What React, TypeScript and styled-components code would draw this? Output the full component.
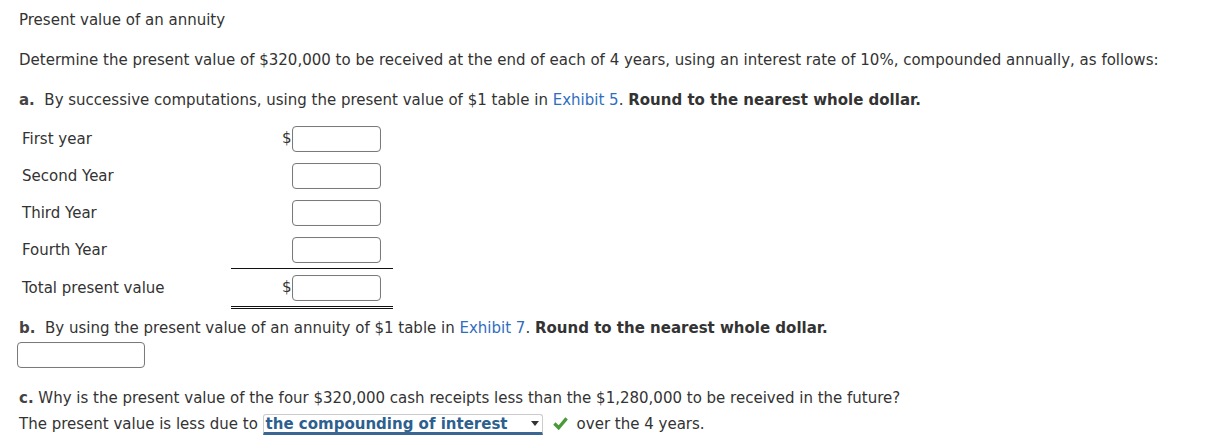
import React from "react";
import styled, { createGlobalStyle } from "styled-components";

const Global = createGlobalStyle`
  body {
    margin: 0;
    background: #fff;
    font-family: "DejaVu Sans", Verdana, sans-serif;
    font-size: 15px;
    color: #333;
  }
`;

const Page = styled.div`
  padding: 10px 19px;
`;

const Para = styled.p<{ gap?: number }>`
  margin: 0;
  margin-top: ${(p) => p.gap ?? 0}px;
  line-height: 20px;
`;

const Lead = styled.b`
  color: #444;
`;

const ExLink = styled.a`
  color: #2f6ebf;
  text-decoration: none;
`;

const Strong = styled.b`
  color: #333;
`;

const Grid = styled.table`
  border-collapse: collapse;
  margin-top: 10px;
  margin-left: 3px;
`;

const Label = styled.td`
  width: 209px;
  padding: 0;
  height: 37px;
  vertical-align: middle;
`;

const AmountCell = styled.td<{ line?: "top" | "both" }>`
  width: 150px;
  padding: 0 12px 0 0;
  text-align: right;
  border-top: ${(p) => (p.line ? "1px solid #111" : "none")};
  border-bottom: ${(p) => (p.line === "both" ? "3px double #111" : "none")};
  height: 37px;
`;

const Dollar = styled.span`
  display: inline-block;
  width: 10px;
  text-align: left;
`;

const Box = styled.input<{ w?: number }>`
  box-sizing: border-box;
  width: ${(p) => p.w ?? 89}px;
  height: 26px;
  border: 1px solid #7a7a7a;
  border-radius: 4px;
  box-shadow: inset 0 0 1px rgba(0, 0, 0, 0.15);
  vertical-align: middle;
  font: inherit;
  padding: 0 4px;
`;

const WideBox = styled(Box)`
  display: block;
  margin-top: 4px;
  margin-left: -2px;
`;

const Select = styled.span`
  display: inline-flex;
  align-items: center;
  justify-content: space-between;
  box-sizing: border-box;
  width: 280px;
  height: 21px;
  border: 1px solid #ccc;
  border-bottom: 3px solid #3b6592;
  border-radius: 3px 3px 0 0;
  padding: 0 3px 0 2px;
  color: #2d5f8f;
  font-weight: bold;
  vertical-align: middle;
`;

const Caret = styled.span`
  width: 0;
  height: 0;
  border-left: 4px solid transparent;
  border-right: 4px solid transparent;
  border-top: 5px solid #333;
`;

const Check = styled.svg`
  margin: 0 9px 0 10px;
  vertical-align: -2px;
`;

const rows = ["First year", "Second Year", "Third Year", "Fourth Year"];

export default function App() {
  return (
    <Page>
      <Global />
      <Para>Present value of an annuity</Para>
      <Para gap={20}>
        Determine the present value of $320,000 to be received at the end of each of 4 years, using an interest rate
        of 10%, compounded annually, as follows:
      </Para>
      <Para gap={20}>
        <Lead>a.</Lead>&nbsp; By successive computations, using the present value of $1 table in{" "}
        <ExLink>Exhibit 5</ExLink>. <Strong>Round to the nearest whole dollar.</Strong>
      </Para>
      <Grid>
        <tbody>
          {rows.map((r, i) => (
            <tr key={r}>
              <Label>{r}</Label>
              <AmountCell>
                <Dollar>{i === 0 ? "$" : ""}</Dollar>
                <Box />
              </AmountCell>
            </tr>
          ))}
          <tr>
            <Label>Total present value</Label>
            <AmountCell line="both">
              <Dollar>$</Dollar>
              <Box />
            </AmountCell>
          </tr>
        </tbody>
      </Grid>
      <Para gap={9}>
        <Lead>b.</Lead>&nbsp; By using the present value of an annuity of $1 table in <ExLink>Exhibit 7</ExLink>.{" "}
        <Strong>Round to the nearest whole dollar.</Strong>
      </Para>
      <WideBox w={128} />
      <Para gap={20}>
        <Lead>c.</Lead> Why is the present value of the four $320,000 cash receipts less than the $1,280,000 to be
        received in the future?
      </Para>
      <Para gap={6}>
        The present value is less due to{" "}
        <Select>
          the compounding of interest
          <Caret />
        </Select>
        <Check width="15" height="15" viewBox="0 0 16 16">
          <path d="M1.5 8 L6 12.5 L14.5 2.5" fill="none" stroke="#4a9a3a" strokeWidth="3.5" />
        </Check>
        over the 4 years.
      </Para>
    </Page>
  );
}
